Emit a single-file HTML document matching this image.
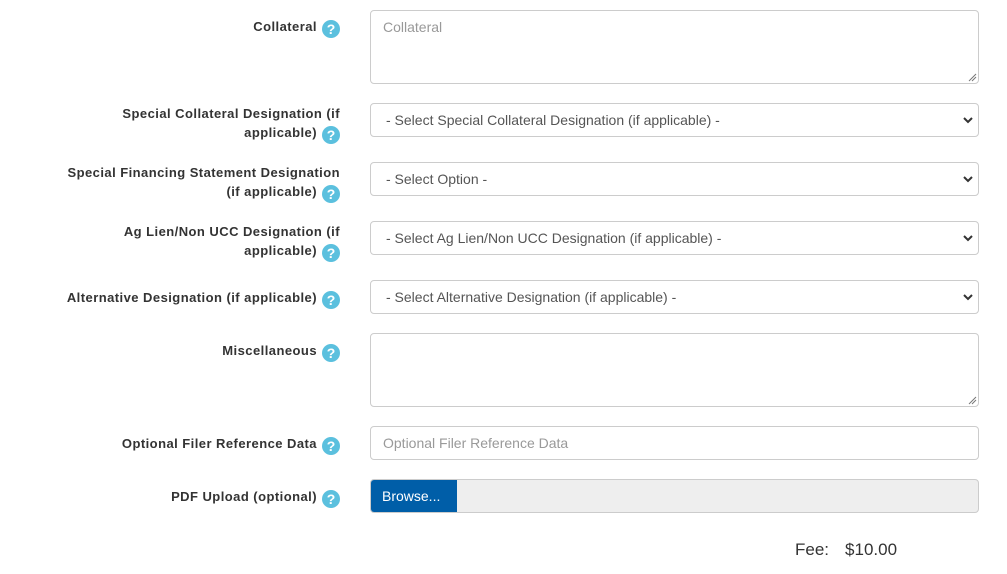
<!DOCTYPE html>
<html><head><meta charset="utf-8"><style>
body{margin:0;width:1007px;height:574px;background:#fff;font-family:"Liberation Sans",Arial,sans-serif;position:relative;overflow:hidden}
.lbl{position:absolute;right:667px;width:320px;text-align:right;font-weight:bold;font-size:13px;color:#333;line-height:19px;white-space:nowrap;letter-spacing:0.45px}
.q{display:inline-block;width:18px;height:18px;border-radius:50%;background:#5bc0de;color:#fff;font-size:14px;line-height:18px;text-align:center;font-weight:bold;vertical-align:-3px;margin-left:5px;letter-spacing:0}
.box{position:absolute;left:370px;width:609px;border:1px solid #ccc;border-radius:4px;box-sizing:border-box;font-size:14px;color:#555}
.sel{height:34px;line-height:32px;padding-left:15px}
.sel svg{position:absolute;right:5px;top:12px}
.ph{color:#999}
.rz{position:absolute;right:1px;bottom:1px}
</style></head><body>
<div class="lbl" style="top:17px">Collateral<span class="q">?</span></div>
<div class="box" style="top:10px;height:74px;padding:8px 12px"><span class="ph">Collateral</span>
<svg class="rz" width="9" height="9"><path d="M1 8L8 1M4 8L8 4" stroke="#777" stroke-width="1"/></svg></div>

<div class="lbl" style="top:104px">Special Collateral Designation (if<br>applicable)<span class="q">?</span></div>
<div class="box sel" style="top:103px">- Select Special Collateral Designation (if applicable) -<svg width="10" height="8"><path d="M1 2L5 6L9 2" stroke="#333" stroke-width="2" fill="none"/></svg></div>

<div class="lbl" style="top:163px">Special Financing Statement Designation<br>(if applicable)<span class="q">?</span></div>
<div class="box sel" style="top:162px">- Select Option -<svg width="10" height="8"><path d="M1 2L5 6L9 2" stroke="#333" stroke-width="2" fill="none"/></svg></div>

<div class="lbl" style="top:222px">Ag Lien/Non UCC Designation (if<br>applicable)<span class="q">?</span></div>
<div class="box sel" style="top:221px">- Select Ag Lien/Non UCC Designation (if applicable) -<svg width="10" height="8"><path d="M1 2L5 6L9 2" stroke="#333" stroke-width="2" fill="none"/></svg></div>

<div class="lbl" style="top:288px">Alternative Designation (if applicable)<span class="q">?</span></div>
<div class="box sel" style="top:280px">- Select Alternative Designation (if applicable) -<svg width="10" height="8"><path d="M1 2L5 6L9 2" stroke="#333" stroke-width="2" fill="none"/></svg></div>

<div class="lbl" style="top:341px">Miscellaneous<span class="q">?</span></div>
<div class="box" style="top:333px;height:74px"><svg class="rz" width="9" height="9"><path d="M1 8L8 1M4 8L8 4" stroke="#777" stroke-width="1"/></svg></div>

<div class="lbl" style="top:434px">Optional Filer Reference Data<span class="q">?</span></div>
<div class="box sel" style="top:426px;padding-left:12px"><span class="ph">Optional Filer Reference Data</span></div>

<div class="lbl" style="top:487px">PDF Upload (optional)<span class="q">?</span></div>
<div class="box" style="top:479px;height:34px;background:#eee;overflow:hidden"><div style="position:absolute;left:-1px;top:-1px;width:87px;height:34px;background:#005ea8;color:#fff;line-height:34px;padding-left:12px;box-sizing:border-box;border-radius:4px 0 0 4px">Browse...</div></div>

<div style="position:absolute;left:795px;top:540px;font-size:17px;color:#333">Fee:<span style="margin-left:16px">$10.00</span></div>
</body></html>
